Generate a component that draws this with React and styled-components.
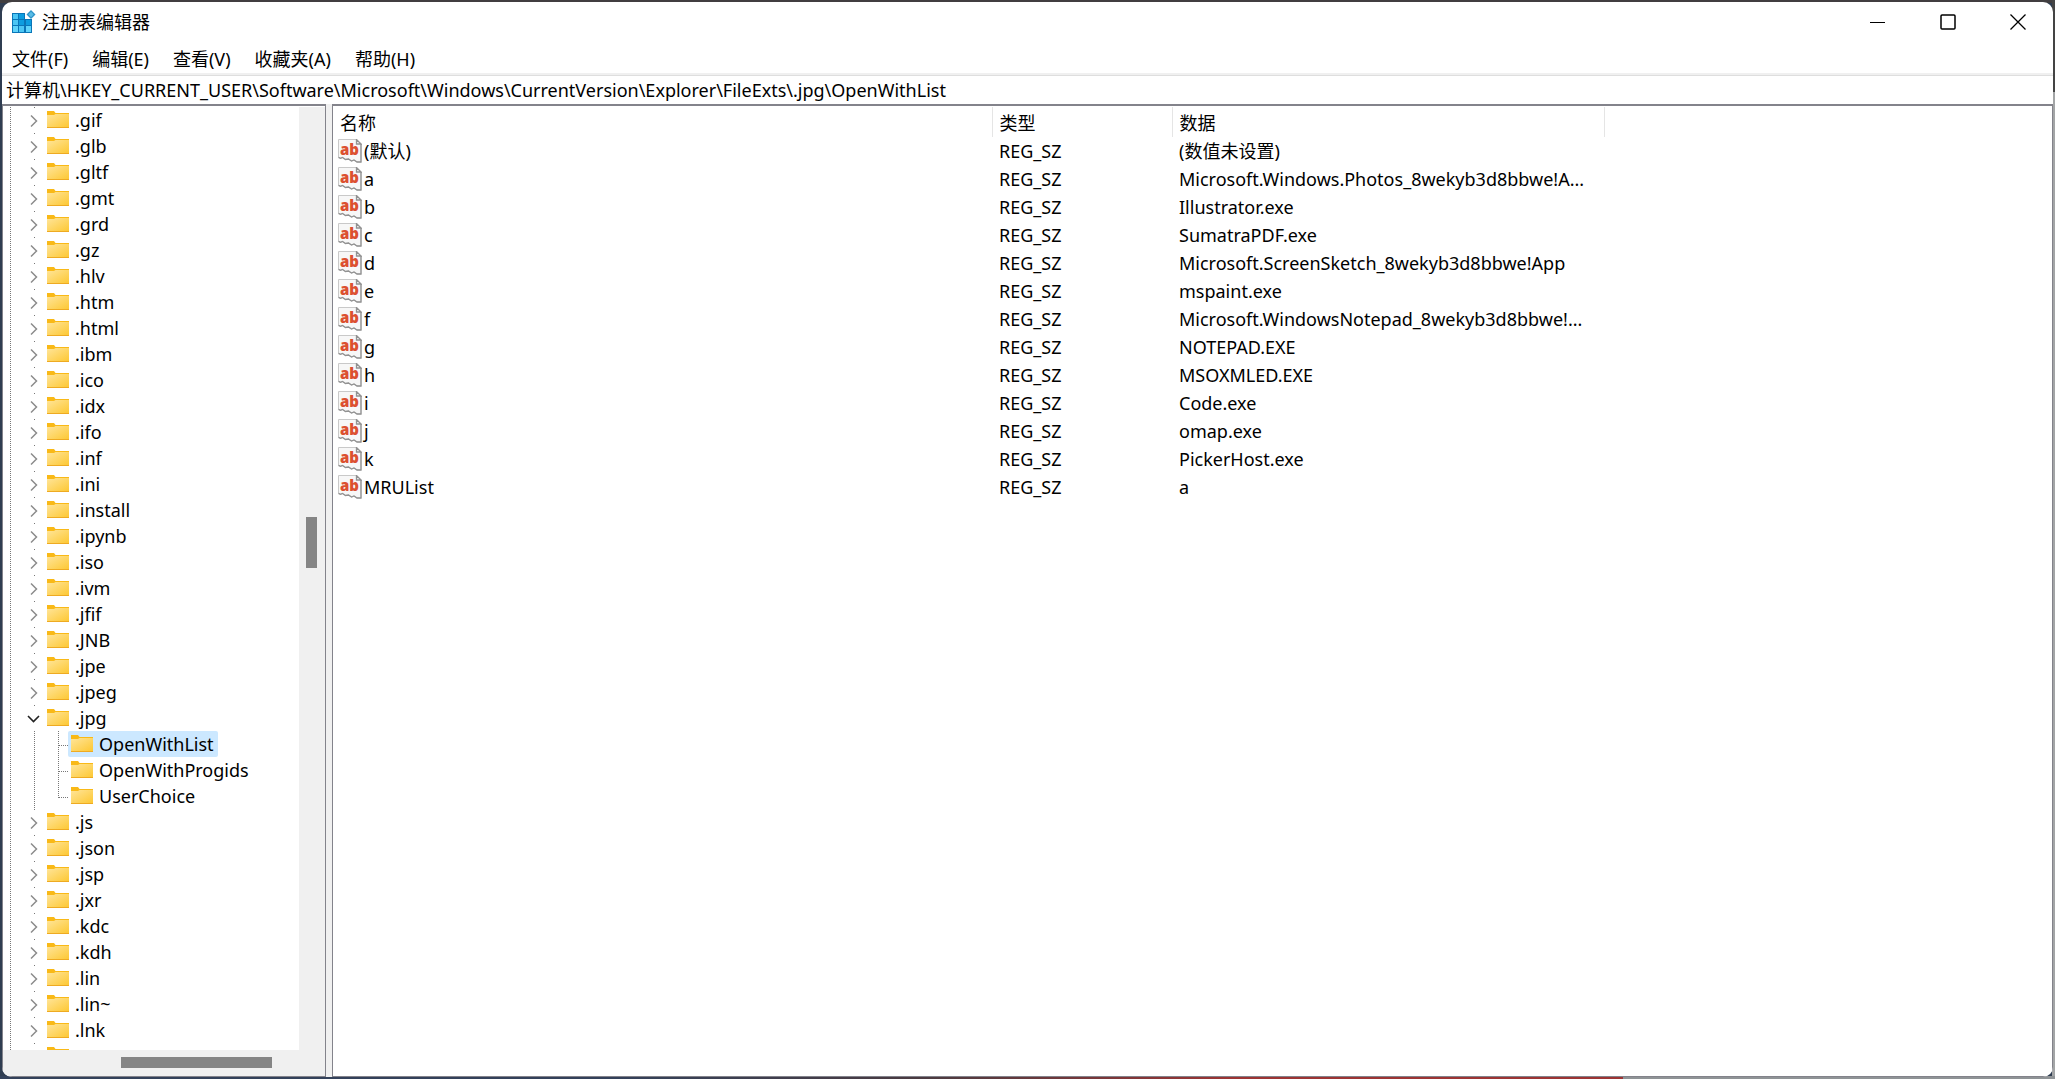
import React from 'react';
import styled, { createGlobalStyle } from 'styled-components';

const Global = createGlobalStyle`
  *, *::before, *::after { box-sizing: border-box; }
  html, body, #root { height: 100%; margin: 0; }
  body {
    font: 18px/26px "Noto Sans", "Noto Sans CJK SC", sans-serif;
    color: #000;
  }
  button, input { font: inherit; color: inherit; border: 0; background: none; padding: 0; margin: 0; }
`;

const Desktop = styled.div`
  height: 100vh;
  padding: 2px;
  background:
    linear-gradient(90deg, #33415a 0 30%, #4b3b41 45%, #9c3434 60% 79%, #8f9396 79%) bottom / 100% 3px no-repeat,
    linear-gradient(#444 0 92px, #a3a5a6 92px) right / 3px 100% no-repeat,
    linear-gradient(#413e40, #413e40) top / 100% 3px no-repeat,
    #2f3d51;
`;
const Window = styled.main`
  height: 100%;
  display: flex;
  flex-direction: column;
  background: #fff;
  border-radius: 10px;
  overflow: hidden;
`;
const TitleBar = styled.header`
  display: flex;
  align-items: center;
  height: 42px;
  padding: 0 0 2px 10px;
  gap: 6px;
`;
const Title = styled.h1`
  flex: 1;
  margin: 0;
  font-size: 18px;
  font-weight: 400;
`;
const CaptionButtons = styled.div`
  display: flex;
`;
const CaptionButton = styled.button`
  width: 70px;
  height: 40px;
  display: grid;
  place-items: center;
`;
const MenuBar = styled.nav`
  display: flex;
  gap: 24px;
  height: 29px;
  padding-left: 10px;
`;
const MenuItem = styled.button`
  line-height: 28px;
`;
const AddressBar = styled.div`
  border-top: 2px solid #f0f0f0;
`;
const Address = styled.input`
  display: block;
  height: 29px;
  width: 100%;
  border-top: 1px solid #dedede;
  padding: 0 4px 2px;
  outline: 0;
`;
const Panes = styled.div`
  flex: 1;
  min-height: 0;
  display: grid;
  grid-template-columns: 324px 6px minmax(0, 1fr);
`;
const Splitter = styled.div`
  background: #f0f0f0;
`;
const Pane = styled.section`
  border: 1px solid #83838b;
  border-top-width: 2px;
  padding-top: 1px;
  min-height: 0;
  min-width: 0;
`;
const TreePane = styled(Pane)`
  display: grid;
  grid-template-columns: minmax(0, 1fr) 26px;
  grid-template-rows: minmax(0, 1fr) 26px;
`;
const Tree = styled.ul`
  list-style: none;
  margin: 0;
  padding: 0 0 0 7px;
  overflow: hidden;
  background: repeating-linear-gradient(#777 0 1px, #fff 1px 2px) 7px 0 / 1px 100% no-repeat;
`;
const VTrack = styled.div`
  background: #f0f0f0;
  padding: 410px 8px 0 7px;
`;
const HTrack = styled.div`
  grid-column: 1 / -1;
  background: #f0f0f0;
  padding: 7px 0 0 118px;
`;
const Thumb = styled.div`
  background: #858585;
  width: ${(p) => p.$w}px;
  height: ${(p) => p.$h}px;
`;
const TreeRow = styled.li`
  display: flex;
  align-items: center;
  height: 26px;
  padding-left: 10px;
`;
const Guide = styled.svg`
  flex: none;
  display: block;
`;
const NodeLabel = styled.span`
  display: flex;
  align-items: center;
  height: 26px;
  gap: 6px;
  padding: 0 4px 0 3px;
  border-radius: 2px;
  background: ${(p) => (p.$selected ? '#cce8ff' : 'transparent')};
`;
const Table = styled.table`
  table-layout: fixed;
  border-collapse: collapse;
  width: 1271px;
`;
const Col = styled.col`
  width: ${(p) => p.$w}px;
`;
const Th = styled.th`
  height: 30px;
  padding: 2px 7px 0;
  text-align: left;
  font-weight: 400;
  border-right: 1px solid #e5e5e5;
`;
const Td = styled.td`
  height: 28px;
  padding: 0 7px;
  white-space: nowrap;
`;
const NameCell = styled.div`
  display: flex;
  align-items: center;
  gap: 2px;
  margin-left: -2px;
`;

function RegeditIcon() {
  return (
    <svg width="24" height="24" viewBox="0 0 24 24" aria-hidden="true">
      <path d="M0 3h13v6h7v14H0z" fill="#0a76b8" />
      <path d="M1 4h5v5H1zM1 10h5v5H1zM7 16h5v6H7z" fill="#4cc6f4" />
      <path d="M7 4h5v5H7zM7 10h5v5H7zM14 10h5v5h-5z" fill="#0d9de0" />
      <path d="M1 16h5v6H1zM14 16h5v6h-5z" fill="#5fd3fa" />
      <path d="M19 0l4.500 4.500L19 9l-4.500-4.500z" fill="#2c93c8" />
      <path d="M19 1.800l2.700 2.700L19 7.200l-2.700-2.700z" fill="#58bce6" />
    </svg>
  );
}

function FolderIcon() {
  return (
    <svg width="22" height="18" viewBox="0 0 22 18" aria-hidden="true">
      <defs>
        <linearGradient id="folder" x1="0" y1="0" x2="1" y2="1">
          <stop offset="0" stopColor="#ffe59a" />
          <stop offset="1" stopColor="#fdc834" />
        </linearGradient>
      </defs>
      <path d="M0 0h7l1.500 2H22v3H0z" fill="#f9b917" />
      <path d="M0 4h7l1.500-1H22v13H0z" fill="url(#folder)" />
      <path d="M0 16h22v1H0z" fill="#eeaa22" />
    </svg>
  );
}

function StringIcon() {
  return (
    <svg width="24" height="24" viewBox="0 0 24 24" aria-hidden="true">
      <path d="M.5.500h18l4.500 4.500v18h-4l-3-2-2.500 1-3-2-3 .5-3-2-2 .8-2-1z" fill="#f7f7f7" stroke="#c9c9c9" />
      <path d="M18.500.500v4.500H23zM23 5v18h-4l-3-2-2.500 1-3-2-3 .5-3-2-2 .8-2-1" fill="none" stroke="#929292" strokeWidth="1.300" />
      <text x="2" y="16" fontFamily="Open Sans, sans-serif" fontSize="15" fontWeight="800" fill="#dc5030">ab</text>
    </svg>
  );
}

function Branch({ open }) {
  return (
    <Guide width="24" height="26" viewBox="0 0 24 26" aria-hidden="true">
      <path d="M14.500 0v1" stroke="#777" />
      {open ? (
        <path d="M8 11l5.500 5.500L19 11" fill="none" stroke="#222" strokeWidth="1.600" />
      ) : (
        <path d="M11 8.500l5.500 5.500L11 19.500" fill="none" stroke="#8c8c8c" strokeWidth="1.500" />
      )}
    </Guide>
  );
}

function Leaf({ last }) {
  return (
    <Guide width="48" height="26" viewBox="0 0 48 26" aria-hidden="true">
      <path d={`M14.500 0v26M38.500 0v${last ? 15 : 26}M39 14.500h9`} stroke="#777" strokeDasharray="1 1" />
    </Guide>
  );
}

const before = ['.gif', '.glb', '.gltf', '.gmt', '.grd', '.gz', '.hlv', '.htm', '.html', '.ibm', '.ico', '.idx', '.ifo', '.inf', '.ini', '.install', '.ipynb', '.iso', '.ivm', '.jfif', '.JNB', '.jpe', '.jpeg'];
const children = ['OpenWithList', 'OpenWithProgids', 'UserChoice'];
const after = ['.js', '.json', '.jsp', '.jxr', '.kdc', '.kdh', '.lin', '.lin~', '.lnk', ''];
const nodes = [
  ...before.map((name) => ({ name })),
  { name: '.jpg', open: true },
  ...children.map((name, i) => ({ name, leaf: true, selected: i === 0, last: i === children.length - 1 })),
  ...after.map((name) => ({ name })),
];

const values = [
  ['(默认)', '(数值未设置)'],
  ['a', 'Microsoft.Windows.Photos_8wekyb3d8bbwe!A...'],
  ['b', 'Illustrator.exe'],
  ['c', 'SumatraPDF.exe'],
  ['d', 'Microsoft.ScreenSketch_8wekyb3d8bbwe!App'],
  ['e', 'mspaint.exe'],
  ['f', 'Microsoft.WindowsNotepad_8wekyb3d8bbwe!...'],
  ['g', 'NOTEPAD.EXE'],
  ['h', 'MSOXMLED.EXE'],
  ['i', 'Code.exe'],
  ['j', 'omap.exe'],
  ['k', 'PickerHost.exe'],
  ['MRUList', 'a'],
];

export default function App() {
  return (
    <Desktop>
      <Global />
      <Window>
        <TitleBar>
          <RegeditIcon />
          <Title>注册表编辑器</Title>
          <CaptionButtons>
            <CaptionButton aria-label="最小化">
              <svg width="16" height="16"><path d="M0 8.500h15" stroke="#000" /></svg>
            </CaptionButton>
            <CaptionButton aria-label="最大化">
              <svg width="16" height="16"><rect x="1" y="1" width="14" height="14" rx="1" fill="none" stroke="#000" strokeWidth="1.500" /></svg>
            </CaptionButton>
            <CaptionButton aria-label="关闭">
              <svg width="16" height="16"><path d="M.5.500l15 15M15.500.500l-15 15" stroke="#000" strokeWidth="1.300" /></svg>
            </CaptionButton>
          </CaptionButtons>
        </TitleBar>
        <MenuBar>
          {['文件(F)', '编辑(E)', '查看(V)', '收藏夹(A)', '帮助(H)'].map((m) => (
            <MenuItem key={m}>{m}</MenuItem>
          ))}
        </MenuBar>
        <AddressBar>
          <Address
            aria-label="地址"
            defaultValue={'计算机\\HKEY_CURRENT_USER\\Software\\Microsoft\\Windows\\CurrentVersion\\Explorer\\FileExts\\.jpg\\OpenWithList'}
          />
        </AddressBar>
        <Panes>
          <TreePane>
            <Tree>
              {nodes.map((n, i) => (
                <TreeRow key={i}>
                  {n.leaf ? <Leaf last={n.last} /> : <Branch open={n.open} />}
                  <NodeLabel $selected={n.selected}>
                    <FolderIcon />
                    {n.name}
                  </NodeLabel>
                </TreeRow>
              ))}
            </Tree>
            <VTrack><Thumb $w={11} $h={51} /></VTrack>
            <HTrack><Thumb $w={151} $h={11} /></HTrack>
          </TreePane>
          <Splitter />
          <Pane>
            <Table>
              <colgroup>
                <Col $w={659} />
                <Col $w={180} />
                <Col $w={432} />
              </colgroup>
              <thead>
                <tr><Th>名称</Th><Th>类型</Th><Th>数据</Th></tr>
              </thead>
              <tbody>
                {values.map(([name, data]) => (
                  <tr key={name}>
                    <Td><NameCell><StringIcon />{name}</NameCell></Td>
                    <Td>REG_SZ</Td>
                    <Td>{data}</Td>
                  </tr>
                ))}
              </tbody>
            </Table>
          </Pane>
        </Panes>
      </Window>
    </Desktop>
  );
}
